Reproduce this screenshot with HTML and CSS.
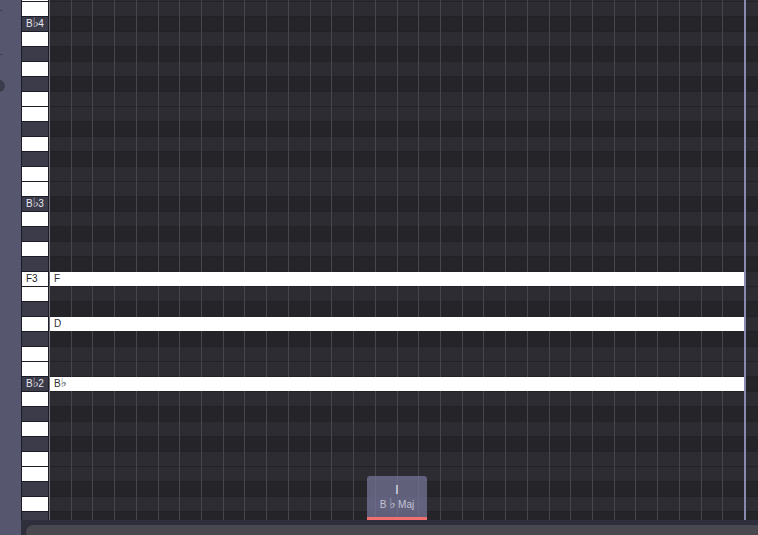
FILE: index.html
```html
<!DOCTYPE html>
<html>
<head>
<meta charset="utf-8">
<link rel="stylesheet" href="styles.css">
</head>
<body>
<div class="app">
  <div class="sidebar">
    <svg class="side-marks" width="21" height="100" viewBox="0 0 21 100">
      <rect x="0" y="10" width="2" height="1" fill="#3b3b4b"/>
      <rect x="0" y="54" width="2" height="1" fill="#3b3b4b"/>
      <circle cx="-1" cy="86" r="6" fill="#3b3b4b"/>
    </svg>
  </div>
  <div class="main">
    <div class="roll">
      <div class="keys">
        <div class="k w first"></div>
        <div class="k w"></div>
        <div class="k b">B<span class="flat">♭</span>4</div>
        <div class="k w"></div>
        <div class="k b"></div>
        <div class="k w"></div>
        <div class="k b"></div>
        <div class="k w"></div>
        <div class="k w"></div>
        <div class="k b"></div>
        <div class="k w"></div>
        <div class="k b"></div>
        <div class="k w"></div>
        <div class="k w"></div>
        <div class="k b">B<span class="flat">♭</span>3</div>
        <div class="k w"></div>
        <div class="k b"></div>
        <div class="k w"></div>
        <div class="k b"></div>
        <div class="k w">F3</div>
        <div class="k w"></div>
        <div class="k b"></div>
        <div class="k w"></div>
        <div class="k b"></div>
        <div class="k w"></div>
        <div class="k w"></div>
        <div class="k b">B<span class="flat">♭</span>2</div>
        <div class="k w"></div>
        <div class="k b"></div>
        <div class="k w"></div>
        <div class="k b"></div>
        <div class="k w"></div>
        <div class="k w"></div>
        <div class="k b"></div>
        <div class="k w"></div>
        <div class="k b"></div>
      </div>
      <div class="grid">
        <div class="r w first"></div>
        <div class="r w"></div>
        <div class="r b"></div>
        <div class="r w"></div>
        <div class="r b"></div>
        <div class="r w"></div>
        <div class="r b"></div>
        <div class="r w"></div>
        <div class="r w"></div>
        <div class="r b"></div>
        <div class="r w"></div>
        <div class="r b"></div>
        <div class="r w"></div>
        <div class="r w"></div>
        <div class="r b"></div>
        <div class="r w"></div>
        <div class="r b"></div>
        <div class="r w"></div>
        <div class="r b"></div>
        <div class="r w"><div class="note">F</div></div>
        <div class="r w"></div>
        <div class="r b"></div>
        <div class="r w"><div class="note">D</div></div>
        <div class="r b"></div>
        <div class="r w"></div>
        <div class="r w"></div>
        <div class="r b"><div class="note">B<span class="flat">♭</span></div></div>
        <div class="r w"></div>
        <div class="r b"></div>
        <div class="r w"></div>
        <div class="r b"></div>
        <div class="r w"></div>
        <div class="r w"></div>
        <div class="r b"></div>
        <div class="r w"></div>
        <div class="r b"></div>

        <div class="vlines">
          <span></span><span></span><span></span><span></span><span></span><span></span><span></span><span></span>
          <span></span><span></span><span></span><span></span><span></span><span></span><span></span><span></span>
          <span></span><span></span><span></span><span></span><span></span><span></span><span></span><span></span>
          <span></span><span></span><span></span><span></span><span></span><span></span><span></span><span></span>
        </div>
        <div class="endline"></div>
        <div class="chord">
          <div class="chord-num">I</div>
          <div class="chord-name">B <span class="flat">♭</span> Maj</div>
        </div>
      </div>
    </div>
    <div class="hbar"><div class="thumb"></div></div>
  </div>
</div>
</body>
</html>
```

FILE: styles.css
```css
html, body {
  margin: 0;
  padding: 0;
  width: 758px;
  height: 535px;
  overflow: hidden;
  background: #2c2c32;
}

.app {
  display: flex;
  width: 758px;
  height: 535px;
}

.sidebar {
  flex: none;
  width: 21px;
  background: #56566f;
}

.side-marks {
  display: block;
}

.main {
  flex: 1;
  min-width: 0;
  display: flex;
  flex-direction: column;
}

.roll {
  flex: none;
  height: 520px;
  display: flex;
  overflow: hidden;
}

.keys {
  flex: none;
  width: 26px;
  border-left: 1px solid #1c1c26;
  border-right: 1px solid #1c1c26;
  display: flex;
  flex-direction: column;
}

.k {
  flex: none;
  height: 14px;
  border-bottom: 1px solid #1c1c26;
  padding-left: 4px;
  font-family: "Liberation Sans", "DejaVu Sans", sans-serif;
  font-size: 10px;
  line-height: 14px;
  white-space: nowrap;
}

.flat {
  font-family: "DejaVu Sans", sans-serif;
  font-size: 13px;
  line-height: 0;
  letter-spacing: -0.5px;
}

.k.first,
.r.first {
  margin-top: -13px;
}

.k.w {
  background: #ffffff;
  color: #222228;
}

.k.b {
  background: #3b3b4a;
  color: #e8e8f0;
}

.grid {
  flex: 1;
  min-width: 0;
  position: relative;
  display: flex;
  flex-direction: column;
}

.r {
  flex: none;
  height: 14px;
  border-bottom: 1px solid #212126;
  display: flex;
}

.r.w {
  background: #2c2c32;
}

.r.b {
  background: #242429;
}

.note {
  position: relative;
  z-index: 2;
  margin-left: 1px;
  width: 694px;
  box-sizing: border-box;
  padding-left: 4px;
  background: #ffffff;
  color: #2e2e34;
  font-family: "Liberation Sans", "DejaVu Sans", sans-serif;
  font-size: 10px;
  line-height: 14px;
}

.note .flat {
  font-size: 12px;
}

.vlines {
  position: absolute;
  top: 0;
  bottom: 0;
  left: 0;
  width: 695px;
  display: grid;
  grid-template-columns: repeat(32, 1fr);
  z-index: 1;
  pointer-events: none;
}

.vlines span {
  border-left: 1px solid #46464d;
}

.vlines span:first-child {
  border-left-color: #707078;
}

.endline {
  position: absolute;
  top: 0;
  bottom: 0;
  left: 695px;
  width: 2px;
  background: #8b89b0;
  z-index: 3;
}

.chord {
  position: absolute;
  left: 318px;
  bottom: 0;
  width: 60px;
  height: 44px;
  padding-top: 7px;
  box-sizing: border-box;
  border-bottom: 3px solid #f0716f;
  border-radius: 3px 3px 0 0;
  background: rgba(118, 118, 152, 0.74);
  z-index: 2;
  display: flex;
  flex-direction: column;
  align-items: center;
  font-family: "Liberation Sans", "DejaVu Sans", sans-serif;
}

.chord-num {
  font-size: 12px;
  line-height: 14px;
  color: #e6e6f0;
}

.chord-name {
  font-size: 10px;
  line-height: 15px;
  color: #c4c4d4;
  white-space: nowrap;
}

.chord-name .flat {
  font-size: 14px;
}

.hbar {
  flex: none;
  height: 15px;
  box-sizing: border-box;
  padding: 5px 0 0 5px;
  background: #2f2e3c;
  overflow: hidden;
}

.thumb {
  height: 14px;
  background: #49484f;
  border-radius: 7px 0 0 7px;
}
```
